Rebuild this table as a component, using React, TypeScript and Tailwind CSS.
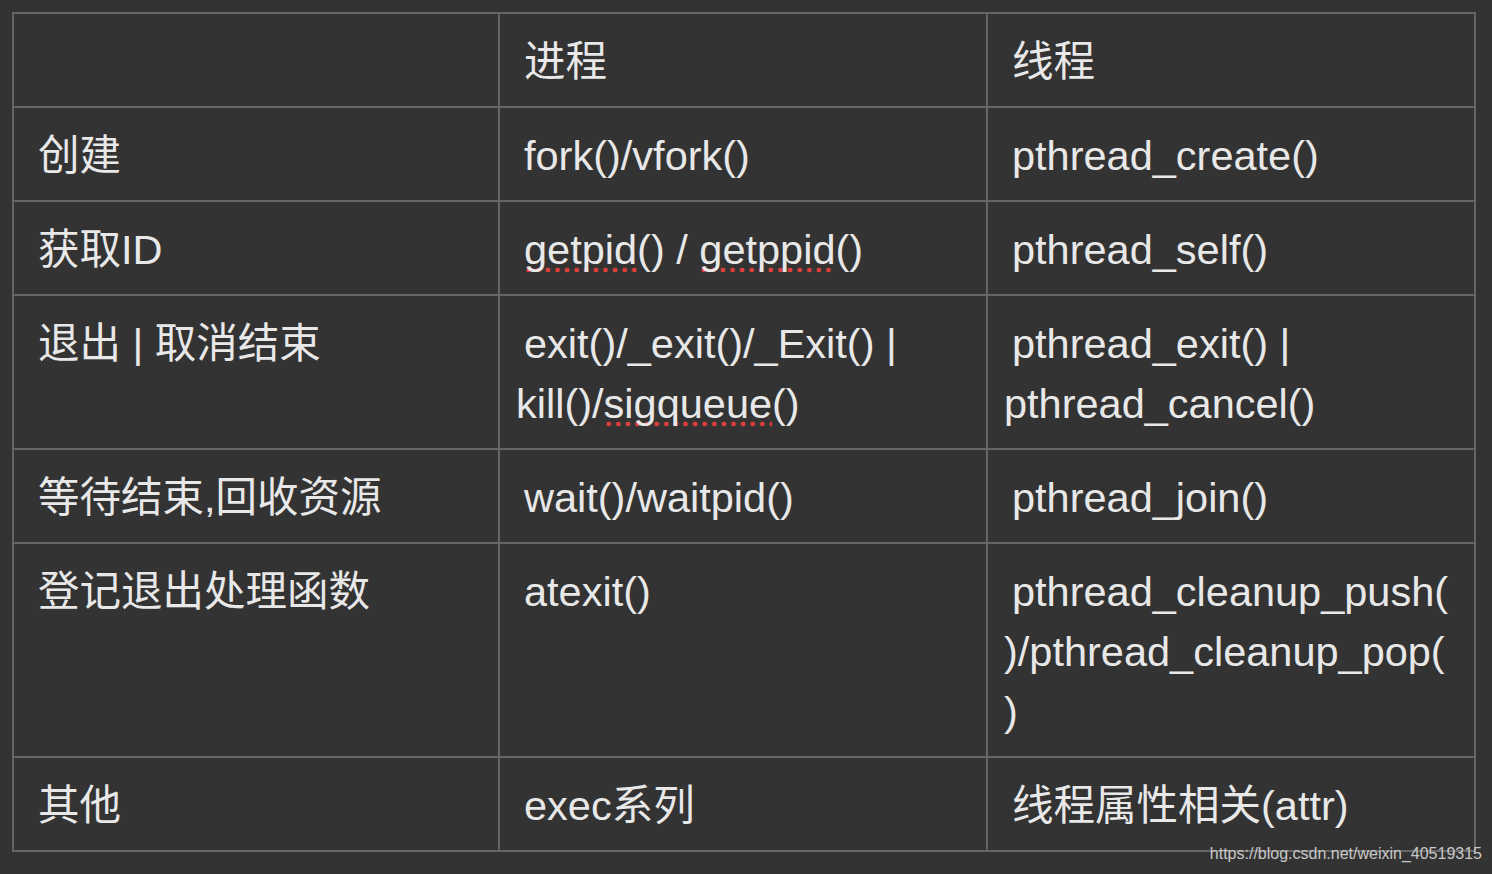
import React from 'react';

// Process vs thread API comparison table (dark theme)

type Cell = React.ReactNode;

const FONT = {
  fontFamily: '"Liberation Sans", "Noto Sans CJK SC", sans-serif',
};

// macOS-style red spell-check dots under a word
function Spell({ children }: { children: React.ReactNode }) {
  return (
    <span className="bg-[radial-gradient(circle,#dc3f3a_2.1px,transparent_2.7px)] bg-[length:9.6px_6px] bg-bottom-left bg-repeat-x">
      {children}
    </span>
  );
}

const rows: Cell[][] = [
  ['', '进程', '线程'],
  ['创建', 'fork()/vfork()', 'pthread_create()'],
  [
    '获取ID',
    <>
      <Spell>getpid</Spell>() / <Spell>getppid</Spell>()
    </>,
    'pthread_self()',
  ],
  [
    '退出 | 取消结束',
    <>
      exit()/_exit()/_Exit() |<br />
      kill()/<Spell>sigqueue</Spell>()
    </>,
    <>
      pthread_exit() |<br />
      pthread_cancel()
    </>,
  ],
  ['等待结束,回收资源', 'wait()/waitpid()', 'pthread_join()'],
  [
    '登记退出处理函数',
    'atexit()',
    <>
      pthread_cleanup_push(<br />
      )/pthread_cleanup_pop(<br />)
    </>,
  ],
  ['其他', 'exec系列', '线程属性相关(attr)'],
];

export default function App() {
  return (
    <div
      className="relative h-[874px] w-full overflow-hidden bg-[#333333] p-[12px] text-[#e8e8e8]"
      style={FONT}
    >
      <div className="grid w-[1464px] grid-cols-[484px_486px_486px] gap-[2px] bg-[#666666] p-[2px]">
        {rows.map((row, r) =>
          row.map((cell, c) => (
            <div
              key={`${r}-${c}`}
              className="bg-[#333333] px-4 pt-[18px] pb-[14px] text-[41.5px] leading-[60px] indent-2 whitespace-nowrap"
            >
              {cell}
            </div>
          ))
        )}
      </div>

      {/* watermark */}
      <div className="absolute right-[10px] top-[844px] text-[16px] leading-5 text-[#c8c8c8]">
        https://blog.csdn.net/weixin_40519315
      </div>
    </div>
  );
}
